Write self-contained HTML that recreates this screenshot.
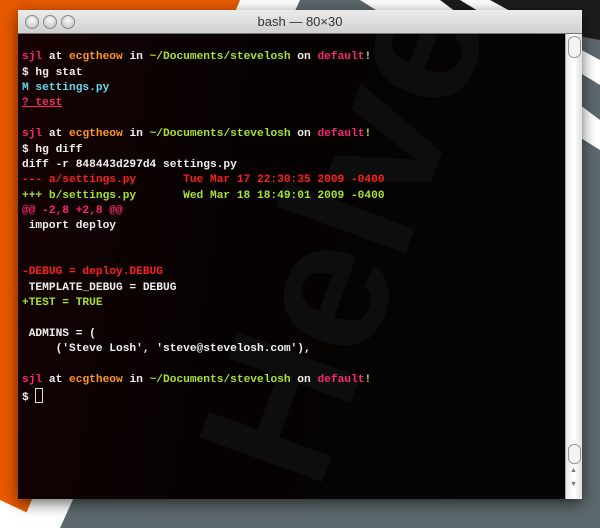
<!DOCTYPE html>
<html><head><style>
body{margin:0;width:600px;height:528px;overflow:hidden;position:relative;background:#5d686c;font-family:"Liberation Sans",sans-serif}
.bg{position:absolute;inset:0}
.win{position:absolute;left:18px;top:10px;width:564px;height:489px;box-shadow:0 4px 14px rgba(0,0,0,.6)}
.title{height:23px;background:linear-gradient(#ececec,#d0d0d0);border-bottom:1px solid #777;text-align:center;font-size:13px;line-height:23px;color:#333;position:relative}
.dot{position:absolute;top:5px;width:12px;height:12px;border-radius:50%;background:radial-gradient(circle at 50% 35%,#fafafa,#bbb);border:1px solid #888}
.term{position:absolute;top:24px;left:0;width:548px;height:465px;background:linear-gradient(100deg,#160202 0%,#060202 40%,#040404 100%);overflow:hidden}
.sb{position:absolute;top:24px;right:0;width:16px;height:465px;background:linear-gradient(90deg,#e8e8e8,#fff,#e0e0e0);border-left:1px solid #aaa}
pre{margin:0;position:absolute;left:4px;top:1px;font-family:"Liberation Mono",monospace;font-weight:bold;font-size:11.2px;line-height:15.36px;color:#f0f0f0}
.p{color:#f92672}.o{color:#fd971f}.g{color:#a6e22e}.c{color:#66d9ef}.r{color:#f92020}.u{text-decoration:underline}
</style></head><body>
<svg class="bg" width="600" height="528">
<rect x="0" y="0" width="600" height="528" fill="#5d686c"/>
<polygon points="0,0 240,0 20,528 0,528" fill="#e85a00"/>
<polygon points="240,0 300,0 60,528 20,528" fill="#fff"/>
<polygon points="380,0 600,0 600,40" fill="#1c1c1c"/>
<polygon points="360,0 440,0 600,120 600,150" fill="#fff"/>
<polygon points="460,0 490,0 600,60 600,85" fill="#fff"/>
<polygon points="0,500 60,528 0,528" fill="#fff"/>
</svg>
<div class="win">
<div class="title"><span class="dot" style="left:7px"></span><span class="dot" style="left:25px"></span><span class="dot" style="left:43px"></span>bash — 80×30</div>
<div class="term">
<svg width="548" height="465" style="position:absolute;left:0;top:0"><text x="300" y="460" transform="rotate(-70 300 460)" font-family="Liberation Sans" font-weight="bold" font-size="190" fill="#0d0d0d">Helvet</text></svg>
<pre>

<span class="p">sjl</span> at <span class="o">ecgtheow</span> in <span class="g">~/Documents/stevelosh</span> on <span class="p">default</span><span class="g">!</span>
$ hg stat
<span class="c">M settings.py</span>
<span class="p u">? test</span>

<span class="p">sjl</span> at <span class="o">ecgtheow</span> in <span class="g">~/Documents/stevelosh</span> on <span class="p">default</span><span class="g">!</span>
$ hg diff
diff -r 848443d297d4 settings.py
<span class="r">--- a/settings.py       Tue Mar 17 22:30:35 2009 -0400</span>
<span class="g">+++ b/settings.py       Wed Mar 18 18:49:01 2009 -0400</span>
<span class="p">@@ -2,8 +2,8 @@</span>
 import deploy


<span class="r">-DEBUG = deploy.DEBUG</span>
 TEMPLATE_DEBUG = DEBUG
<span class="g">+TEST = TRUE</span>

 ADMINS = (
     ('Steve Losh', 'steve@stevelosh.com'),

<span class="p">sjl</span> at <span class="o">ecgtheow</span> in <span class="g">~/Documents/stevelosh</span> on <span class="p">default</span><span class="g">!</span>
$ <span style="display:inline-block;width:6px;height:13px;border:1px solid #ddd;vertical-align:-3px"></span>
</pre>
</div>
<div class="sb">
<div style="position:absolute;top:2px;left:2px;width:11px;height:20px;border:1px solid #999;border-radius:6px;background:#f4f4f4"></div>
<div style="position:absolute;top:410px;left:2px;width:11px;height:18px;border:1px solid #999;border-radius:6px;background:#f4f4f4"></div>
<div style="position:absolute;top:433px;left:4px;font-size:7px;color:#777">▲</div>
<div style="position:absolute;top:447px;left:4px;font-size:7px;color:#777">▼</div>
</div>
</div>
</body></html>
